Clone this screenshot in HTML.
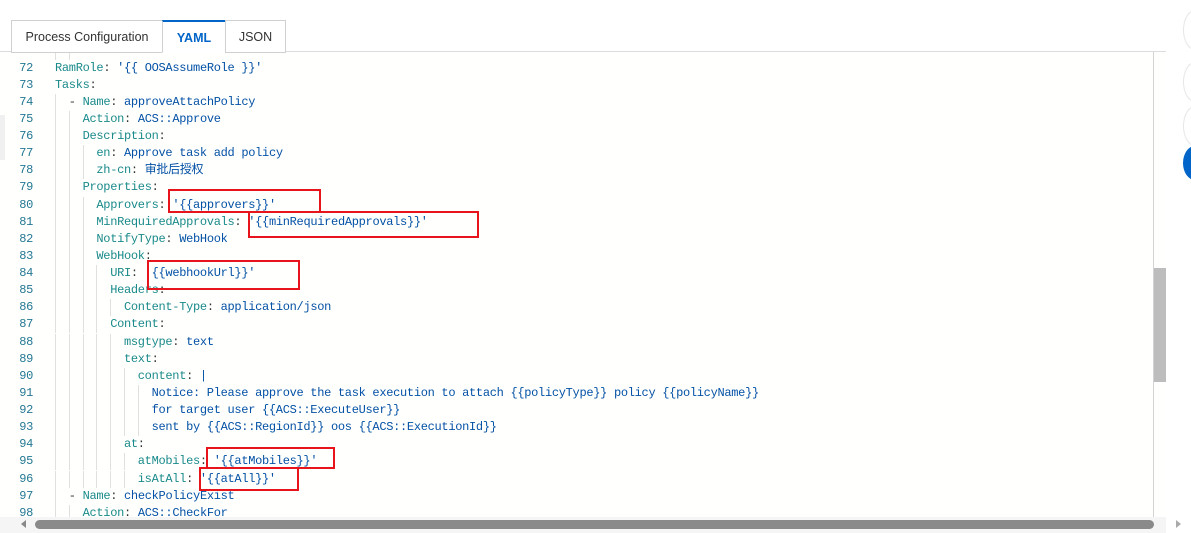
<!DOCTYPE html>
<html><head><meta charset="utf-8"><style>
*{margin:0;padding:0;box-sizing:border-box}
body{width:1191px;height:533px;background:#fff;position:relative;overflow:hidden;font-family:"Liberation Sans",sans-serif}
.ed{position:absolute;left:0;top:0;width:1166px;height:533px;background:#fffffe}
.ln{position:absolute;left:0;width:1150px;height:17.12px;line-height:17.12px;font-family:"Liberation Mono","Noto Sans CJK SC",monospace;font-size:12px;letter-spacing:-0.3px;white-space:pre}
.n{position:absolute;left:0;width:33px;text-align:right;color:#237893}
.c{position:absolute;left:55px;top:0}
.g{display:inline-block;width:13.8px;height:17.12px;border-left:1px solid #e0e0e0;vertical-align:top}
.k{color:#1a8a8a}.v{color:#0451a5}.p{color:#333}
.tabs{position:absolute;left:0;top:0;width:1166px;height:52px;background:#fff;border-bottom:1px solid #ddd;z-index:5}
.tab{position:absolute;top:20px;height:33px;border:1px solid #d0d0d0;background:#fff;font-size:12.5px;color:#333;text-align:center;line-height:33px}
.box{position:absolute;border:2px solid #e8141b;z-index:6}
</style></head><body>
<div class="ed">
<div class="ln" style="top:42.4px"><span class="n">71</span><span class="c"><span class="g"></span><span class="g"></span><span class="k">Default:</span></span></div>
<div class="ln" style="top:59.5px"><span class="n">72</span><span class="c"><span class="k">RamRole</span><span class="p">: </span><span class="v">'{{ OOSAssumeRole }}'</span></span></div>
<div class="ln" style="top:76.6px"><span class="n">73</span><span class="c"><span class="k">Tasks</span><span class="p">:</span></span></div>
<div class="ln" style="top:93.7px"><span class="n">74</span><span class="c"><span class="g"></span><span class="p">- </span><span class="k">Name</span><span class="p">: </span><span class="v">approveAttachPolicy</span></span></div>
<div class="ln" style="top:110.9px"><span class="n">75</span><span class="c"><span class="g"></span><span class="g"></span><span class="k">Action</span><span class="p">: </span><span class="v">ACS::Approve</span></span></div>
<div class="ln" style="top:128px"><span class="n">76</span><span class="c"><span class="g"></span><span class="g"></span><span class="k">Description</span><span class="p">:</span></span></div>
<div class="ln" style="top:145.1px"><span class="n">77</span><span class="c"><span class="g"></span><span class="g"></span><span class="g"></span><span class="k">en</span><span class="p">: </span><span class="v">Approve task add policy</span></span></div>
<div class="ln" style="top:162.2px"><span class="n">78</span><span class="c"><span class="g"></span><span class="g"></span><span class="g"></span><span class="k">zh-cn</span><span class="p">: </span><span class="v">审批后授权</span></span></div>
<div class="ln" style="top:179.4px"><span class="n">79</span><span class="c"><span class="g"></span><span class="g"></span><span class="k">Properties</span><span class="p">:</span></span></div>
<div class="ln" style="top:196.5px"><span class="n">80</span><span class="c"><span class="g"></span><span class="g"></span><span class="g"></span><span class="k">Approvers</span><span class="p">: </span><span class="v">'{{approvers}}'</span></span></div>
<div class="ln" style="top:213.6px"><span class="n">81</span><span class="c"><span class="g"></span><span class="g"></span><span class="g"></span><span class="k">MinRequiredApprovals</span><span class="p">: </span><span class="v">'{{minRequiredApprovals}}'</span></span></div>
<div class="ln" style="top:230.7px"><span class="n">82</span><span class="c"><span class="g"></span><span class="g"></span><span class="g"></span><span class="k">NotifyType</span><span class="p">: </span><span class="v">WebHook</span></span></div>
<div class="ln" style="top:247.8px"><span class="n">83</span><span class="c"><span class="g"></span><span class="g"></span><span class="g"></span><span class="k">WebHook</span><span class="p">:</span></span></div>
<div class="ln" style="top:265px"><span class="n">84</span><span class="c"><span class="g"></span><span class="g"></span><span class="g"></span><span class="g"></span><span class="k">URI</span><span class="p">: </span><span class="v">'{{webhookUrl}}'</span></span></div>
<div class="ln" style="top:282.1px"><span class="n">85</span><span class="c"><span class="g"></span><span class="g"></span><span class="g"></span><span class="g"></span><span class="k">Headers</span><span class="p">:</span></span></div>
<div class="ln" style="top:299.2px"><span class="n">86</span><span class="c"><span class="g"></span><span class="g"></span><span class="g"></span><span class="g"></span><span class="g"></span><span class="k">Content-Type</span><span class="p">: </span><span class="v">application/json</span></span></div>
<div class="ln" style="top:316.3px"><span class="n">87</span><span class="c"><span class="g"></span><span class="g"></span><span class="g"></span><span class="g"></span><span class="k">Content</span><span class="p">:</span></span></div>
<div class="ln" style="top:333.5px"><span class="n">88</span><span class="c"><span class="g"></span><span class="g"></span><span class="g"></span><span class="g"></span><span class="g"></span><span class="k">msgtype</span><span class="p">: </span><span class="v">text</span></span></div>
<div class="ln" style="top:350.6px"><span class="n">89</span><span class="c"><span class="g"></span><span class="g"></span><span class="g"></span><span class="g"></span><span class="g"></span><span class="k">text</span><span class="p">:</span></span></div>
<div class="ln" style="top:367.7px"><span class="n">90</span><span class="c"><span class="g"></span><span class="g"></span><span class="g"></span><span class="g"></span><span class="g"></span><span class="g"></span><span class="k">content</span><span class="p">: </span><span class="v">|</span></span></div>
<div class="ln" style="top:384.8px"><span class="n">91</span><span class="c"><span class="g"></span><span class="g"></span><span class="g"></span><span class="g"></span><span class="g"></span><span class="g"></span><span class="g"></span><span class="v">Notice: Please approve the task execution to attach {{policyType}} policy {{policyName}}</span></span></div>
<div class="ln" style="top:402px"><span class="n">92</span><span class="c"><span class="g"></span><span class="g"></span><span class="g"></span><span class="g"></span><span class="g"></span><span class="g"></span><span class="g"></span><span class="v">for target user {{ACS::ExecuteUser}}</span></span></div>
<div class="ln" style="top:419.1px"><span class="n">93</span><span class="c"><span class="g"></span><span class="g"></span><span class="g"></span><span class="g"></span><span class="g"></span><span class="g"></span><span class="g"></span><span class="v">sent by {{ACS::RegionId}} oos {{ACS::ExecutionId}}</span></span></div>
<div class="ln" style="top:436.2px"><span class="n">94</span><span class="c"><span class="g"></span><span class="g"></span><span class="g"></span><span class="g"></span><span class="g"></span><span class="k">at</span><span class="p">:</span></span></div>
<div class="ln" style="top:453.3px"><span class="n">95</span><span class="c"><span class="g"></span><span class="g"></span><span class="g"></span><span class="g"></span><span class="g"></span><span class="g"></span><span class="k">atMobiles</span><span class="p">: </span><span class="v">'{{atMobiles}}'</span></span></div>
<div class="ln" style="top:470.5px"><span class="n">96</span><span class="c"><span class="g"></span><span class="g"></span><span class="g"></span><span class="g"></span><span class="g"></span><span class="g"></span><span class="k">isAtAll</span><span class="p">: </span><span class="v">'{{atAll}}'</span></span></div>
<div class="ln" style="top:487.6px"><span class="n">97</span><span class="c"><span class="g"></span><span class="p">- </span><span class="k">Name</span><span class="p">: </span><span class="v">checkPolicyExist</span></span></div>
<div class="ln" style="top:504.7px"><span class="n">98</span><span class="c"><span class="g"></span><span class="g"></span><span class="k">Action</span><span class="p">: </span><span class="v">ACS::CheckFor</span></span></div>
</div>
<div class="tabs">
<div class="tab" style="left:11px;width:152px">Process Configuration</div>
<div class="tab" style="left:162px;width:64px;border-top:2px solid #0064c8;color:#0064c8;font-weight:bold;border-bottom-color:#fff">YAML</div>
<div class="tab" style="left:225px;width:61px">JSON</div>
</div>
<div style="position:absolute;left:0;top:115px;width:5px;height:45px;background:#f0f0f0"></div>
<div style="position:absolute;left:1153px;top:52px;width:1px;height:466px;background:#d4d4d4"></div>
<div style="position:absolute;left:1154px;top:268px;width:12px;height:114px;background:#bdbdbd"></div>
<div style="position:absolute;left:0;top:517px;width:1166px;height:16px;background:#f5f5f5"></div>
<div style="position:absolute;left:35px;top:520px;width:1119px;height:9px;border-radius:5px;background:#8a8a8a"></div>
<div style="position:absolute;left:21px;top:520px;width:0;height:0;border-top:4px solid transparent;border-bottom:4px solid transparent;border-right:5px solid #888"></div>
<div style="position:absolute;left:1176px;top:520px;width:0;height:0;border-top:4px solid transparent;border-bottom:4px solid transparent;border-left:5px solid #aaa"></div>
<div style="position:absolute;left:1183px;top:10px;width:24px;height:40px;border-radius:50%;border:1px solid #e6e6e6;background:#fff"></div>
<div style="position:absolute;left:1183px;top:62px;width:24px;height:40px;border-radius:50%;border:1px solid #e6e6e6;background:#fff"></div>
<div style="position:absolute;left:1183px;top:106px;width:24px;height:40px;border-radius:50%;border:1px solid #e6e6e6;background:#fff"></div>
<div style="position:absolute;left:1183px;top:146px;width:24px;height:34px;border-radius:50%;background:#0064c8"></div>
<div class="box" style="left:168px;top:189px;width:153px;height:24px"></div>
<div class="box" style="left:248px;top:211px;width:231px;height:27px"></div>
<div class="box" style="left:147px;top:260px;width:153px;height:30px"></div>
<div class="box" style="left:206px;top:447px;width:129px;height:22px"></div>
<div class="box" style="left:199px;top:467px;width:100px;height:24px"></div>
</body></html>
